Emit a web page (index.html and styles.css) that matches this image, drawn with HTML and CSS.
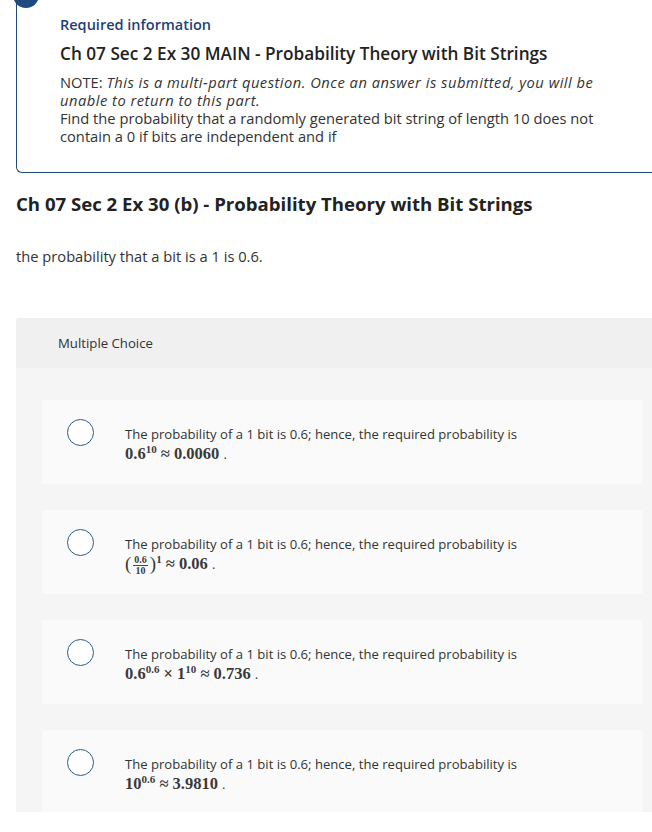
FILE: index.html
```html
<!DOCTYPE html>
<html>
<head>
  <title>Ch 07 Sec 2 Ex 30 (b)</title>
  <link rel="stylesheet" href="styles.css">
</head>
<body>
  <div class="info">
    <span class="badge"></span>
    <p class="info-label">Required information</p>
    <h2 class="info-title">Ch 07 Sec 2 Ex 30 MAIN - Probability Theory with Bit Strings</h2>
    <p class="info-text">NOTE: <em>This is a multi-part question. Once an answer is submitted, you will be unable to return to this part.</em><br>Find the probability that a randomly generated bit string of length 10 does not contain a 0 if bits are independent and if</p>
  </div>

  <h1 class="part-title">Ch 07 Sec 2 Ex 30 (b) - Probability Theory with Bit Strings</h1>
  <p class="prompt">the probability that a bit is a 1 is 0.6.</p>

  <div class="mc">
    <div class="mc-head">Multiple Choice</div>
    <div class="mc-body">
      <div class="choice">
        <span class="radio"></span>
        <div class="choice-text">
          The probability of a 1 bit is 0.6; hence, the required probability is
          <div class="math">0.6<sup>10</sup> &asymp; 0.0060 <span class="dot">.</span></div>
        </div>
      </div>
      <div class="choice">
        <span class="radio"></span>
        <div class="choice-text">
          The probability of a 1 bit is 0.6; hence, the required probability is
          <div class="math"><span class="paren">(</span><span class="frac"><span class="num">0.6</span><span class="den">10</span></span><span class="paren">)</span><sup>1</sup> &asymp; 0.06 <span class="dot">.</span></div>
        </div>
      </div>
      <div class="choice">
        <span class="radio"></span>
        <div class="choice-text">
          The probability of a 1 bit is 0.6; hence, the required probability is
          <div class="math">0.6<sup>0.6</sup> &times; 1<sup>10</sup> &asymp; 0.736 <span class="dot">.</span></div>
        </div>
      </div>
      <div class="choice">
        <span class="radio"></span>
        <div class="choice-text">
          The probability of a 1 bit is 0.6; hence, the required probability is
          <div class="math">10<sup>0.6</sup> &asymp; 3.9810 <span class="dot">.</span></div>
        </div>
      </div>
    </div>
  </div>
</body>
</html>
```

FILE: styles.css
```css
body {
  font-family: "Open Sans", Lato, sans-serif;
  color: #333;
  background-color: #fff;
  margin: 0;
  padding: 0;
}

.info {
  position: relative;
  margin-left: 16px;
  padding: 15px 46px 27px 43px;
  border-left: 1.5px solid #1f4a80;
  border-bottom: 1.5px solid #1f4a80;
  border-bottom-left-radius: 6px;
}

.badge {
  position: absolute;
  left: -4px;
  top: -18px;
  width: 26px;
  height: 26px;
  border-radius: 50%;
  background-color: #1f4a80;
}

.info-label {
  margin: 0;
  font-size: 14.5px;
  line-height: 19px;
  font-weight: 600;
  color: #1f3f78;
}

.info-title {
  margin: 9px 0 8px;
  font-size: 17.2px;
  line-height: 22px;
  font-weight: 600;
  color: #222;
}

.info-text {
  margin: 0;
  font-size: 14.7px;
  line-height: 18px;
  color: #333;
}

.info-text em {
  letter-spacing: 0.5px;
}

.part-title {
  margin: 19px 0 0 16px;
  font-size: 18.6px;
  line-height: 24px;
  font-weight: 700;
  color: #222;
}

.prompt {
  margin: 30px 0 0 16px;
  font-size: 14.7px;
  line-height: 20px;
}

.mc {
  margin: 52px 0 0 16px;
  height: 494px;
  overflow: hidden;
  border-top-left-radius: 3px;
  background-color: #f5f5f5;
}

.mc-head {
  height: 50px;
  padding-left: 42px;
  line-height: 50px;
  font-size: 13.2px;
  background-color: #f0f0f0;
}

.mc-body {
  display: flex;
  flex-direction: column;
  gap: 26px;
  padding: 32px 9px 0 26px;
}

.choice {
  display: flex;
  align-items: flex-start;
  gap: 31px;
  height: 84px;
  padding: 19px 0 0 25px;
  box-sizing: border-box;
  border-radius: 3px;
  background-color: #fafafa;
}

.radio {
  flex: none;
  width: 25px;
  height: 25px;
  border: 1.5px solid #2d5a8a;
  border-radius: 50%;
  background-color: #fff;
}

.choice-text {
  padding-top: 6px;
  font-size: 13.1px;
  line-height: 18px;
  color: #333;
}

.math {
  margin-top: 2px;
  font-family: "Liberation Serif", "DejaVu Serif", serif;
  font-size: 16.5px;
  line-height: 18px;
  font-weight: 700;
  color: #3a3a3a;
}

.math sup {
  font-size: 11px;
  line-height: 0;
  vertical-align: 6px;
}

.math .dot {
  font-family: "Open Sans", sans-serif;
  font-size: 13px;
  font-weight: 400;
}

.paren {
  font-weight: 400;
  font-size: 19px;
  vertical-align: -1px;
}

.frac {
  display: inline-flex;
  flex-direction: column;
  align-items: center;
  vertical-align: middle;
  font-size: 10px;
  line-height: 10px;
  margin: 0 2px;
}

.frac .num {
  border-bottom: 1px solid #444;
  padding: 0 1px;
}
```
